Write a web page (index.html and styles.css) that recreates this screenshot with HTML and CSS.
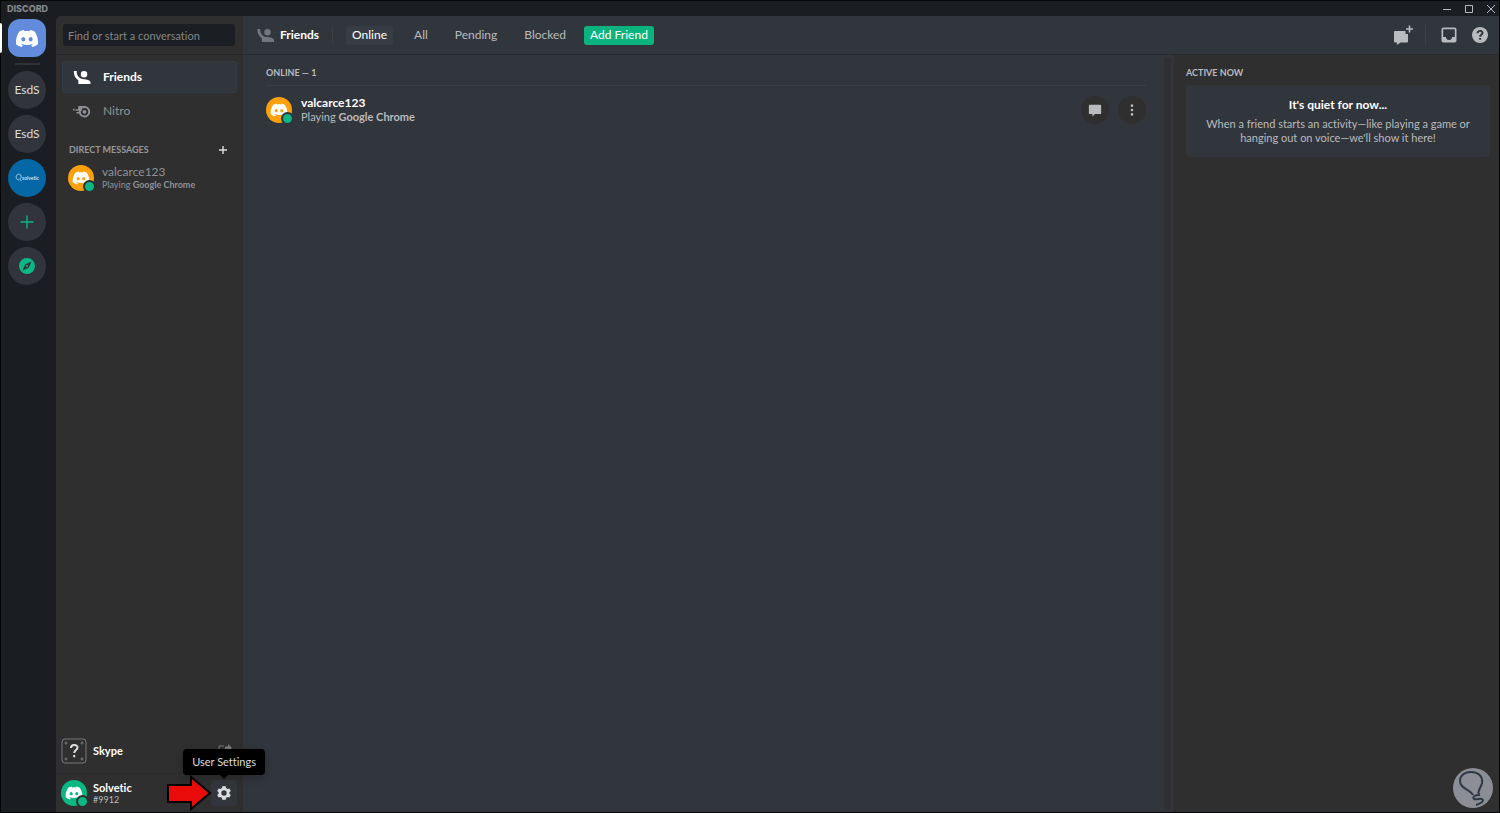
FILE: index.html
```html
<!DOCTYPE html>
<html lang="en">
<head>
    <meta charset="UTF-8">
    <meta name="viewport" content="width=device-width, initial-scale=1.0">
    <title>Discord</title>
    <link rel="stylesheet" href="styles.css">
</head>
<body>
    <!-- Shared icons -->
    <svg class="sprite" aria-hidden="true">
        <symbol id="clyde" viewBox="0 0 28 20">
            <path d="M23.02 1.68C21.31.88 19.51.32 17.66 0c-.25.46-.48.93-.69 1.42-1.97-.3-3.97-.3-5.94 0A15 15 0 0 0 10.34 0C8.48.32 6.68.88 4.97 1.68 1.57 6.78.65 11.75 1.11 16.65A19.9 19.9 0 0 0 7.69 20c.53-.73 1-1.5 1.41-2.31-.77-.29-1.51-.65-2.22-1.08l.54-.43c4.17 1.99 8.99 1.99 13.16 0l.54.43c-.71.43-1.46.79-2.22 1.08.4.81.87 1.58 1.4 2.3a19.9 19.9 0 0 0 6.59-3.34c.54-5.68-.92-10.6-3.87-14.97ZM9.68 13.64c-1.28 0-2.34-1.2-2.34-2.65s1.03-2.64 2.34-2.64 2.36 1.19 2.34 2.64c0 1.46-1.04 2.65-2.34 2.65Zm8.64 0c-1.29 0-2.34-1.2-2.34-2.65s1.03-2.64 2.34-2.64 2.36 1.19 2.34 2.64c0 1.46-1.03 2.65-2.34 2.65Z"/>
        </symbol>
        <symbol id="wave" viewBox="0 0 21 16">
            <path d="M.5 0v1.5c0 4.15 2.21 7.78 5.5 9.8V16h15v-2c0-2.66-5.33-4-8-4h-.25C8 10 4 6 4 1.5V0H.5ZM13 0a4 4 0 1 0 0 8 4 4 0 0 0 0-8Z"/>
        </symbol>
        <symbol id="bubble" viewBox="0 0 24 24">
            <path d="M3 3h18a1.500 1.500 0 0 1 1.500 1.500v13A1.500 1.500 0 0 1 21 19h-9l-4.500 4v-4H3a1.500 1.500 0 0 1-1.500-1.500v-13A1.500 1.500 0 0 1 3 3Z"/>
        </symbol>
    </svg>

    <div class="app">
        <header class="titlebar">
            <span class="wordmark">DISCORD</span>
            <div class="window-controls">
                <button aria-label="Minimize"><svg viewBox="0 0 10 10"><path d="M1 5.500h8"/></svg></button>
                <button aria-label="Maximize"><svg viewBox="0 0 10 10"><path d="M1.500 1.500h7v7h-7z"/></svg></button>
                <button aria-label="Close"><svg viewBox="0 0 10 10"><path d="M1 1l8 8M9 1L1 9"/></svg></button>
            </div>
        </header>

        <div class="columns">
            <nav class="servers" aria-label="Servers">
                <button class="server home" aria-label="Home"><svg><use href="#clyde"/></svg></button>
                <hr>
                <button class="server">EsdS</button>
                <button class="server">EsdS</button>
                <button class="server solvetic" aria-label="Solvetic">
                    <svg viewBox="0 0 24 12"><path d="M5 8.500C2 8 1 6 1.500 4c.5-2 2.500-3 4-2.500C8 2.500 8 5 6 7c0 1 0 2 2 2"/></svg>
                    <span>solvetic</span>
                </button>
                <button class="server green" aria-label="Add a Server">
                    <svg viewBox="0 0 16 16"><path d="M7.300 1.500h1.400v5.800h5.800v1.400H8.700v5.800H7.300V8.700H1.500V7.300h5.800z"/></svg>
                </button>
                <button class="server green" aria-label="Explore Public Servers">
                    <svg viewBox="0 0 16 16"><path fill-rule="evenodd" d="M8 0a8 8 0 1 0 0 16A8 8 0 0 0 8 0Zm1.700 9.700L3.500 12.500l2.800-6.200 6.200-2.800-2.800 6.200ZM8 7a1 1 0 1 1 0 2 1 1 0 0 1 0-2Z"/></svg>
                </button>
            </nav>

            <aside class="sidebar">
                <div class="search">
                    <input type="text" placeholder="Find or start a conversation" aria-label="Find or start a conversation">
                </div>
                <div class="channels">
                    <a class="link active" href="#"><svg><use href="#wave"/></svg>Friends</a>
                    <a class="link" href="#">
                        <svg viewBox="0 0 18 13"><path d="M5.500 1h6v2H8L6.500 4.200H9v1.600H2.500V4.200H5zM0 3.800h1.500v1.800H0zM3.500 7h3v1.600h-3z"/><circle cx="11.500" cy="6.800" r="4.700" fill="none" stroke="currentColor" stroke-width="2"/><circle cx="11.500" cy="6.800" r="1.900"/></svg>Nitro</a>
                    <div class="dm-head">
                        <h2>DIRECT MESSAGES</h2>
                        <button aria-label="Create DM"><svg viewBox="0 0 10 10"><path d="M4.300 1h1.400v3.300H9v1.400H5.700V9H4.300V5.700H1V4.300h3.300z"/></svg></button>
                    </div>
                    <a class="dm" href="#">
                        <span class="avatar"><svg><use href="#clyde"/></svg></span>
                        <span class="who">
                            <span class="name">valcarce123</span>
                            <span class="activity">Playing <b>Google Chrome</b></span>
                        </span>
                    </a>
                </div>

                <div class="skype">
                    <svg class="unknown" viewBox="0 0 26 26"><rect x="1" y="1" width="24" height="24" rx="3"/><circle cx="5" cy="5" r="1"/><circle cx="21" cy="5" r="1"/><circle cx="5" cy="21" r="1"/><circle cx="21" cy="21" r="1"/><path d="M10 10c0-4 6.500-4 6.500-.5 0 2.500-3.300 2.500-3.300 5.500M13.200 17v2.300"/></svg>
                    <b>Skype</b>
                    <svg class="stream" viewBox="0 0 14 14"><path d="M6 2H1v10h12V9"/><path class="solid" d="M7 2.500h3V0l4 4-4 4V5.500H7z"/></svg>
                </div>
                <div class="account">
                    <span class="avatar"><svg><use href="#clyde"/></svg></span>
                    <span class="who">
                        <b>Solvetic</b>
                        <span class="tag">#9912</span>
                    </span>
                    <div class="settings">
                        <svg class="arrow" viewBox="0 0 46 36"><path d="M2 10h23V2l19 16-19 16v-7H2z"/></svg>
                        <button aria-label="User Settings"><svg viewBox="2 2 20 20"><path fill-rule="evenodd" d="M19.700 13.200a8 8 0 0 0 0-2.400l2-1.600-2.200-3.800-2.500 1a8 8 0 0 0-2-1.200L14.500 2.500h-5L9 5.200a8 8 0 0 0-2 1.200l-2.500-1-2.200 3.800 2 1.600a8 8 0 0 0 0 2.400l-2 1.600 2.200 3.800 2.500-1a8 8 0 0 0 2 1.200l.5 2.700h5l.5-2.700a8 8 0 0 0 2-1.200l2.500 1 2.200-3.800zM12 15.800a3.800 3.800 0 1 1 0-7.600 3.800 3.800 0 0 1 0 7.600Z"/></svg></button>
                        <div class="tooltip" role="tooltip">User Settings</div>
                    </div>
                </div>
            </aside>

            <main class="content">
                <div class="toolbar">
                    <svg class="wave"><use href="#wave"/></svg>
                    <h1>Friends</h1>
                    <div class="tabs">
                        <button class="tab selected">Online</button>
                        <button class="tab">All</button>
                        <button class="tab">Pending</button>
                        <button class="tab">Blocked</button>
                        <button class="tab add">Add Friend</button>
                    </div>
                    <div class="tools">
                        <button class="new-dm" aria-label="New Group DM"><svg viewBox="0 0 20 20"><path d="M2 6h10.500v3H15v7.500a1 1 0 0 1-1 1H7.500L4 20v-2.500H2a1 1 0 0 1-1-1V7a1 1 0 0 1 1-1ZM15.700.500h1.600v2.700H20v1.600h-2.700v2.700h-1.600V4.800H13V3.200h2.700z"/></svg></button>
                        <button aria-label="Inbox"><svg viewBox="0 0 16 16"><path fill-rule="evenodd" d="M2.500.500h11a2 2 0 0 1 2 2v11a2 2 0 0 1-2 2h-11a2 2 0 0 1-2-2v-11a2 2 0 0 1 2-2ZM2.200 2.200V10H5a3 3 0 0 0 6 0h2.800V2.200z"/></svg></button>
                        <button aria-label="Help"><svg viewBox="0 0 16 16"><circle cx="8" cy="8" r="8"/><path class="mark" d="M5.600 6.300c0-3.200 4.900-3.200 4.900-.2 0 1.800-2.400 1.800-2.400 3.600M8.100 11v1.800"/></svg></button>
                    </div>
                </div>

                <div class="body">
                    <section class="people">
                        <h2>ONLINE — 1</h2>
                        <div class="friend">
                            <span class="avatar"><svg><use href="#clyde"/></svg></span>
                            <span class="who">
                                <b class="name">valcarce123</b>
                                <span class="activity">Playing <b>Google Chrome</b></span>
                            </span>
                            <button aria-label="Message"><svg><use href="#bubble"/></svg></button>
                            <button aria-label="More"><svg viewBox="0 0 24 24"><circle cx="12" cy="4.500" r="2.200"/><circle cx="12" cy="12" r="2.200"/><circle cx="12" cy="19.500" r="2.200"/></svg></button>
                        </div>
                    </section>
                    <div class="scrollbar"></div>
                    <aside class="now">
                        <h2>ACTIVE NOW</h2>
                        <div class="card">
                            <h3>It's quiet for now...</h3>
                            <p>When a friend starts an activity—like playing a game or hanging out on voice—we'll show it here!</p>
                        </div>
                        <svg class="bulb" viewBox="0 0 40 40"><circle cx="20" cy="20" r="20"/><path d="M20 27c-3-6-13-6-13-14C7 7 12 4 18 4c8 0 12 5 11 11-1 5-5 7-3 12-4 0-7 2-5 4 3 1 8-2 9 1 0 2-4 4-7 5"/></svg>
                    </aside>
                </div>
            </main>
        </div>
    </div>
</body>
</html>
```

FILE: styles.css
```css
*, *::before, *::after {
    box-sizing: border-box;
}
body {
    margin: 0;
    background-color: #1a1d21;
    color: #b9bbbe;
    font-family: Lato, "Liberation Sans", sans-serif;
    font-size: 12px;
    line-height: 14px;
    font-variant-ligatures: none;
}
h1, h2, h3, p {
    margin: 0;
}
h2 {
    font-size: 9px;
    line-height: 13px;
    font-weight: bold;
}
button {
    border: none;
    padding: 0;
    background: none;
    color: inherit;
    font: inherit;
    cursor: pointer;
}
a {
    color: inherit;
    text-decoration: none;
}
svg {
    display: block;
    flex: none;
    fill: currentColor;
}
.sprite {
    position: absolute;
    width: 0;
    height: 0;
}
.app {
    display: flex;
    flex-direction: column;
    height: 100vh;
    border: 1px solid #050607;
}

/* Title bar */
.titlebar {
    display: flex;
    justify-content: space-between;
    align-items: center;
    height: 15px;
    padding: 0 3px 0 6px;
}
.wordmark {
    color: #85888c;
    font-family: Inter, sans-serif;
    font-size: 9px;
    font-weight: 800;
}
.window-controls {
    display: flex;
    gap: 12px;
}
.window-controls svg {
    width: 10px;
    height: 10px;
    fill: none;
    stroke: #b9bbbe;
}

.columns {
    display: flex;
    flex: 1;
    min-height: 0;
}

/* Server rail */
.servers {
    display: flex;
    flex-direction: column;
    align-items: center;
    gap: 6px;
    width: 55px;
    padding: 3px 3px 0 0;
}
.servers hr {
    width: 25px;
    height: 2px;
    margin: 0;
    border: none;
    background-color: #303236;
}
.server {
    display: flex;
    flex-direction: column;
    align-items: center;
    justify-content: center;
    width: 38px;
    height: 38px;
    flex: none;
    border-radius: 50%;
    background-color: #31353b;
    color: #dcddde;
}
.home {
    position: relative;
    border-radius: 12px;
    background-color: #628bdc;
    color: white;
}
.home::before {
    content: "";
    position: absolute;
    left: -8px;
    width: 2px;
    height: 30px;
    border-radius: 0 3px 3px 0;
    background-color: white;
}
.home svg {
    width: 24px;
    height: 17px;
}
.solvetic {
    flex-direction: row;
    background-color: #0667a6;
    color: #c5e0f0;
    font-size: 5px;
    font-weight: bold;
}
.solvetic svg {
    width: 20px;
    height: 10px;
    margin-right: -13px;
    fill: none;
    stroke: currentColor;
}
.green {
    color: #0bb783;
}
.green svg {
    width: 16px;
    height: 16px;
}

/* Sidebar */
.sidebar {
    display: flex;
    flex-direction: column;
    width: 187px;
    flex: none;
    border-radius: 5px 0 0 0;
    background-color: #2f2f2f;
}
.search {
    display: flex;
    align-items: center;
    height: 39px;
    padding: 0 8px 0 7px;
    border-bottom: 1px solid #25272a;
}
.search input {
    width: 100%;
    height: 22px;
    padding: 0 5px;
    border: none;
    border-radius: 3px;
    background-color: #1b1e22;
    font: inherit;
    font-size: 11px;
}
.search input::placeholder {
    color: #84868a;
}
.channels {
    flex: 1;
    padding: 6px;
}
.link {
    display: flex;
    align-items: center;
    gap: 12px;
    height: 32px;
    margin-bottom: 2px;
    padding-left: 11px;
    border-radius: 3px;
    color: #8e9297;
}
.link svg {
    width: 18px;
    height: 13px;
}
.link.active {
    border: 1px solid #303c48;
    padding-left: 10px;
    background-color: #31353c;
    color: white;
    font-weight: bold;
}
.dm-head {
    display: flex;
    justify-content: space-between;
    align-items: center;
    padding: 14px 9px 9px 7px;
    color: #96989b;
}
.dm-head svg {
    width: 10px;
    height: 10px;
    color: #dcddde;
}
.dm {
    display: flex;
    align-items: center;
    gap: 8px;
    padding-left: 6px;
    color: #8e9297;
}
.who {
    display: flex;
    flex-direction: column;
}
.dm .name {
    font-size: 12px;
}
.dm .activity {
    font-size: 9px;
    line-height: 12px;
}
.avatar {
    position: relative;
    display: flex;
    align-items: center;
    justify-content: center;
    width: 26px;
    height: 26px;
    flex: none;
    border-radius: 50%;
    background-color: #fca10b;
    color: white;
}
.avatar svg {
    width: 18px;
    height: 14px;
}
.avatar::after {
    content: "";
    position: absolute;
    right: -2px;
    bottom: -2px;
    width: 13px;
    height: 13px;
    border: 2px solid #2f2f2f;
    border-radius: 50%;
    background-color: #0bb783;
}

/* Account area */
.skype, .account {
    display: flex;
    align-items: center;
    gap: 6px;
    padding: 0 11px 0 5px;
    color: white;
    font-size: 11px;
}
.skype {
    height: 44px;
}
.unknown {
    width: 26px;
    height: 26px;
    fill: none;
    stroke: #777a7e;
}
.unknown path {
    stroke: #dcddde;
    stroke-width: 2;
}
.stream {
    width: 14px;
    height: 14px;
    margin-left: auto;
    fill: none;
    stroke: #77797c;
}
.stream .solid {
    fill: #77797c;
    stroke: none;
}
.account {
    height: 39px;
    padding-right: 6px;
    border-top: 1px solid #292a2c;
}
.account .avatar {
    background-color: #0bb783;
}
.account .who {
    padding-top: 2px;
    line-height: 12px;
}
.tag {
    color: #b9bbbe;
    font-size: 9px;
}
.settings {
    position: relative;
    display: flex;
    align-items: center;
    margin-left: auto;
}
.settings button {
    display: flex;
    align-items: center;
    justify-content: center;
    width: 26px;
    height: 26px;
    border-radius: 3px;
    background-color: #32363c;
    color: #dcddde;
}
.settings button svg {
    width: 14px;
    height: 14px;
}
.arrow {
    position: absolute;
    right: 25px;
    width: 46px;
    height: 36px;
    fill: #ea0b0b;
    stroke: black;
    stroke-width: 2;
}
.tooltip {
    position: absolute;
    right: -28px;
    bottom: 31px;
    padding: 6px 9px;
    border-radius: 4px;
    background-color: black;
    color: #dcddde;
    font-size: 11px;
    white-space: nowrap;
    box-shadow: 0 3px 8px rgba(0, 0, 0, 0.2);
}
.tooltip::after {
    content: "";
    position: absolute;
    top: 100%;
    left: 50%;
    margin-left: -4px;
    border: 4px solid transparent;
    border-top-color: black;
}

/* Friends page */
.content {
    display: flex;
    flex-direction: column;
    flex: 1;
    min-width: 0;
    background-color: #31353c;
}
.toolbar {
    display: flex;
    align-items: center;
    height: 39px;
    padding: 0 11px 0 14px;
    border-bottom: 1px solid #272a2e;
}
.wave {
    width: 17px;
    height: 13px;
    margin-right: 6px;
    color: #72767d;
}
h1 {
    padding-right: 13px;
    border-right: 1px solid #3a3e45;
    color: white;
    font-size: 12px;
    line-height: 18px;
}
.tabs {
    display: flex;
    gap: 15px;
    margin-left: 13px;
}
.tab {
    height: 19px;
    padding: 0 6px;
    border-radius: 3px;
}
.tab.selected {
    background-color: #383d45;
    color: white;
}
.tab.add {
    margin-left: -3px;
    background-color: #0bb37f;
    color: white;
}
.tools {
    display: flex;
    align-items: center;
    gap: 15px;
    margin-left: auto;
}
.tools svg {
    width: 16px;
    height: 16px;
}
.tools .new-dm {
    padding-right: 12px;
    border-right: 1px solid #3a4048;
}
.tools .new-dm svg {
    width: 20px;
    height: 20px;
}
.tools .mark {
    fill: none;
    stroke: #31353c;
    stroke-width: 2;
}
.body {
    display: flex;
    flex: 1;
}
.people {
    flex: 1;
    padding: 11px 18px 0 23px;
}
.people h2 {
    padding-bottom: 6px;
    border-bottom: 1px solid #3a3e45;
}
.friend {
    display: flex;
    align-items: center;
    gap: 9px;
    height: 48px;
}
.friend .who {
    flex: 1;
}
.friend .name {
    color: white;
}
.friend .activity {
    font-size: 11px;
}
.friend .avatar::after {
    border-color: #31353c;
}
.friend button {
    display: flex;
    align-items: center;
    justify-content: center;
    width: 28px;
    height: 28px;
    border-radius: 50%;
    background-color: #2f2f2f;
}
.friend button svg {
    width: 14px;
    height: 14px;
}
.scrollbar {
    width: 7px;
    margin: 2px 3px 2px 0;
    border-radius: 4px;
    background-color: #2f3033;
}
.now {
    display: flex;
    flex-direction: column;
    width: 325px;
    padding: 11px 9px 4px 12px;
    background-color: #2f2f2f;
}
.card {
    margin-top: 6px;
    padding: 13px 20px 12px;
    border-radius: 4px;
    background-color: #31353c;
    text-align: center;
}
h3 {
    margin-bottom: 5px;
    color: white;
    font-size: 12px;
    line-height: 14px;
}
.card p {
    font-size: 11px;
    line-height: 14px;
}
.bulb {
    width: 40px;
    height: 40px;
    margin: auto -3px 0 auto;
    fill: #8b8e94;
}
.bulb path {
    fill: none;
    stroke: #2d3a46;
    stroke-width: 2;
}
```
